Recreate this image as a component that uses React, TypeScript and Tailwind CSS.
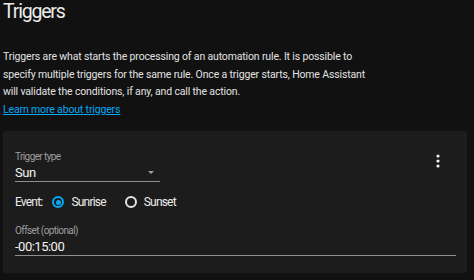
function KebabIcon() {
  return (
    <svg className="h-[16px] w-[6px]" viewBox="0 0 6 16" fill="#f0f0f0">
      <circle cx="3" cy="3" r="1.6" />
      <circle cx="3" cy="8" r="1.6" />
      <circle cx="3" cy="13" r="1.6" />
    </svg>
  )
}

function Radio({ checked }: { checked: boolean }) {
  return (
    <span
      className={`flex h-[12px] w-[12px] items-center justify-center rounded-full border-2 ${
        checked ? 'border-[#03a9f4]' : 'border-[#e6e6e6]'
      }`}
    >
      {checked && <span className="h-[5px] w-[5px] rounded-full bg-[#03a9f4]" />}
    </span>
  )
}

export default function App() {
  return (
    <div className="h-[280px] w-[474px] overflow-hidden bg-[#111111] px-[3px] font-['Roboto',sans-serif] text-[#e1e1e1]">
      <h1 className="text-[19.5px] leading-[24px] tracking-[-1.2px] text-[#ececec]">
        Triggers
      </h1>

      <p className="mt-[24px] whitespace-nowrap text-[10.5px] leading-[17.5px] tracking-[-0.15px]">
        Triggers are what starts the processing of an automation rule. It is possible to
        <br />
        specify multiple triggers for the same rule. Once a trigger starts, Home Assistant
        <br />
        will validate the conditions, if any, and call the action.
      </p>
      <a
        className="block text-[10.5px] leading-[17.5px] tracking-[-0.15px] text-[#03a9f4] underline"
        href="#"
      >
        Learn more about triggers
      </a>

      <div className="mt-[13px] w-[464px] rounded-[3px] bg-[#1c1c1c] pb-[17px] pl-[12px] pr-[11px] pt-[19px]">
        <div className="flex items-start justify-between">
          <div className="w-[145px] border-b border-[#8f8f8f]">
            <div className="text-[10px] leading-[14px] tracking-[-0.6px] text-[#9e9e9e]">
              Trigger type
            </div>
            <div className="flex items-center justify-between pr-[6px]">
              <span className="text-[13px] leading-[17px] tracking-[-0.5px] text-[#f2f2f2]">
                Sun
              </span>
              <svg className="h-[3px] w-[6px]" viewBox="0 0 6 3" fill="#9e9e9e">
                <polygon points="0,0 6,0 3,3" />
              </svg>
            </div>
          </div>
          <div className="mr-[15px] mt-[3px]">
            <KebabIcon />
          </div>
        </div>

        <div className="flex h-[40px] items-center text-[12px] tracking-[-0.8px] text-[#ececec]">
          <span>Event:</span>
          <span className="ml-[10px]">
            <Radio checked />
          </span>
          <span className="ml-[7px]">Sunrise</span>
          <span className="ml-[19px]">
            <Radio checked={false} />
          </span>
          <span className="ml-[7px]">Sunset</span>
        </div>

        <div className="mt-[2px] border-b border-[#8f8f8f]">
          <div className="text-[10px] leading-[14px] tracking-[-0.6px] text-[#9e9e9e]">
            Offset (optional)
          </div>
          <div className="text-[13px] leading-[17px] tracking-[-0.5px] text-[#f2f2f2]">
            -00:15:00
          </div>
        </div>
      </div>
    </div>
  )
}
